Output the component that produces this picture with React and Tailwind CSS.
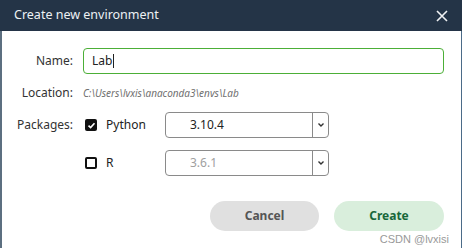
import React from 'react';

function Chevron() {
  return (
    <svg width="8" height="6" viewBox="0 0 8 6" fill="none">
      <path d="M1.5 1.5 L4 4 L6.5 1.5" stroke="#333" strokeWidth="1.4" />
    </svg>
  );
}

function Select({ value, disabled }) {
  return (
    <div className="flex h-[26px] w-[164px] rounded-[4px] border border-[#8a8a8a] bg-white">
      <div className={`flex flex-1 items-center pl-[24px] text-[12px] ${disabled ? 'text-[#a0a0a0]' : 'text-[#222]'}`}>
        {value}
      </div>
      <div className="flex w-[16px] items-center justify-center border-l border-[#8a8a8a]">
        <Chevron />
      </div>
    </div>
  );
}

export default function App() {
  return (
    <div className="flex h-[248px] w-[462px] flex-col bg-white text-[#333]" style={{ fontFamily: '"Noto Sans", "Open Sans", sans-serif' }}>
      {/* Title bar */}
      <div className="flex h-[31px] items-center justify-between bg-[#243447] pl-[14px] pr-[14px]">
        <span className="text-[12.5px] text-[#eef1f4]">Create new environment</span>
        <svg width="12" height="12" viewBox="0 0 12 12">
          <path d="M1 1 L11 11 M11 1 L1 11" stroke="#f0f2f4" strokeWidth="1.6" />
        </svg>
      </div>

      {/* Body */}
      <div className="relative flex flex-1 flex-col border-l-2 border-r border-l-[#5c6f80] border-r-[#4b6b88] pr-[17px] text-[12px]">
        {/* Name */}
        <div className="mt-[17px] flex h-[26px] items-center">
          <div className="w-[71px] text-right">Name:</div>
          <div className="ml-[10px] flex h-[26px] flex-1 items-center rounded-[4px] border border-[#4caf37] pl-[8px] text-[12px] text-[#222]">
            Lab<span className="ml-[1px] inline-block h-[14px] w-[1px] bg-[#222]"></span>
          </div>
        </div>

        {/* Location */}
        <div className="mt-[6px] flex h-[26px] items-center">
          <div className="w-[71px] text-right">Location:</div>
          <div className="ml-[10px] text-[10px] italic text-[#707070]">C:\Users\lvxis\anaconda3\envs\Lab</div>
        </div>

        {/* Python */}
        <div className="mt-[6px] flex h-[26px] items-center">
          <div className="w-[71px] text-right">Packages:</div>
          <div className="ml-[12px] flex w-[80px] items-center">
            <div className="flex h-[12px] w-[12px] items-center justify-center rounded-[2px] bg-[#111]">
              <svg width="9" height="9" viewBox="0 0 9 9">
                <path d="M1.5 4.6 L3.6 6.6 L7.5 2.2" stroke="#fff" strokeWidth="1.6" fill="none" />
              </svg>
            </div>
            <span className="ml-[9px] text-[#222]">Python</span>
          </div>
          <Select value="3.10.4" />
        </div>

        {/* R */}
        <div className="mt-[12px] flex h-[26px] items-center">
          <div className="w-[71px]"></div>
          <div className="ml-[12px] flex w-[80px] items-center">
            <div className="h-[12px] w-[12px] rounded-[2px] border-2 border-[#111]"></div>
            <span className="ml-[9px] text-[#222]">R</span>
          </div>
          <Select value="3.6.1" disabled />
        </div>

        {/* Buttons */}
        <div className="mt-[25px] flex justify-end gap-[15px]">
          <button className="h-[30px] w-[109px] rounded-full bg-[#e0e0e0] text-[12px] font-bold text-[#555]">Cancel</button>
          <button className="h-[30px] w-[110px] rounded-full bg-[#d9eedc] text-[12px] font-bold text-[#17673a]">Create</button>
        </div>

        <span className="absolute bottom-[1px] right-[12px] text-[11px] text-[#999]" style={{ fontFamily: '"Liberation Sans", sans-serif' }}>CSDN @lvxisi</span>
      </div>
    </div>
  );
}
